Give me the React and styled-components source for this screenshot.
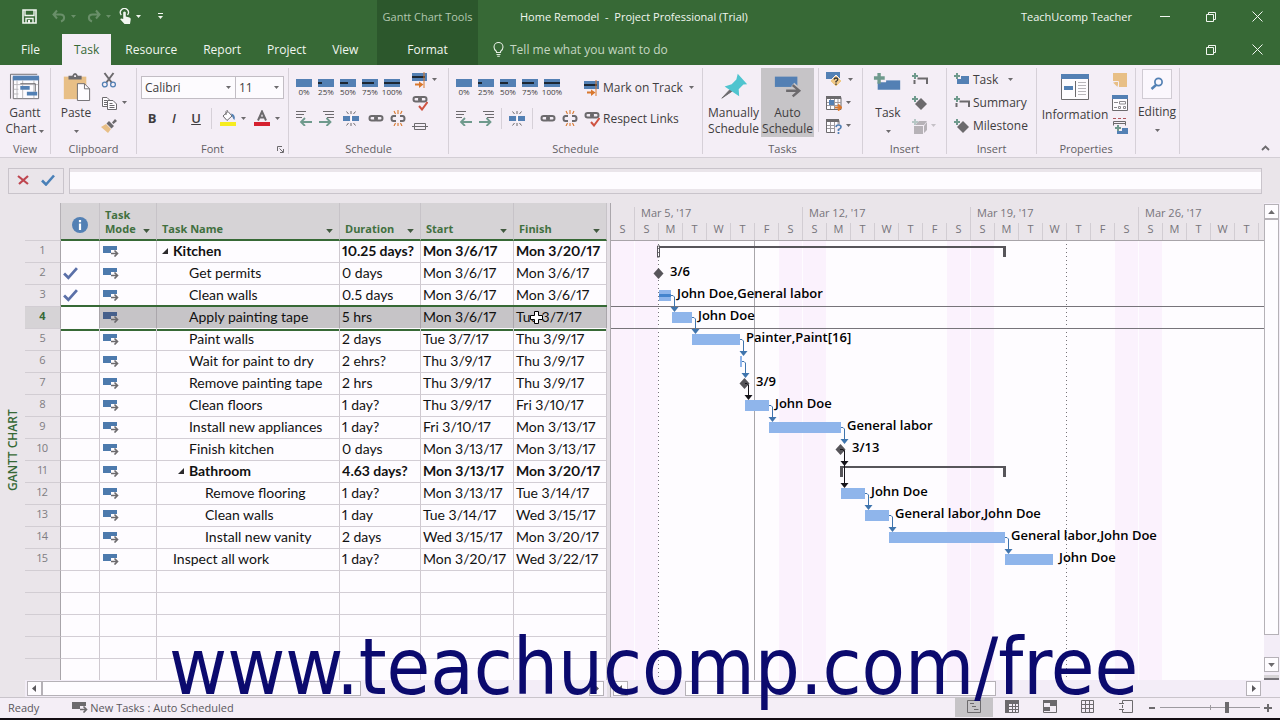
/* eslint-disable react/prop-types */
import { useState } from "react";
import styled, { createGlobalStyle } from "styled-components";

const fontUi = `"Open Sans", "Noto Sans", sans-serif`;
const fontGrid = `Lato, "Open Sans", sans-serif`;

const green = "#376936";
const greenDark = "#2c572c";
const blue = "#5380b4";
const orange = "#d9782d";
const gray = "#6c6a6d";
const teal = "#6f9a8d";

const GlobalStyle = createGlobalStyle`
  * {
    box-sizing: border-box;
  }

  body {
    margin: 0;
    font-family: ${fontUi};
    font-size: 12px;
    color: #3f3d40;
    background: #eae5ea;
  }

  button,
  select,
  input {
    font: inherit;
    color: inherit;
    margin: 0;
    padding: 0;
    border: 0;
    background: none;
  }
`;

const Page = styled.div`
  position: relative;
  display: flex;
  flex-direction: column;
  height: 100vh;
  overflow: hidden;
`;

/* ---------- title bar and tabs ---------- */

const TitleRow = styled.header`
  display: flex;
  align-items: center;
  height: 34px;
  padding-bottom: 2px;
  background: ${green};
  color: #f1f6f0;
`;

const QuickAccess = styled.div`
  display: flex;
  align-items: center;
  width: 377px;
  padding-left: 21px;
`;

const QuickButton = styled.button`
  display: flex;
  align-items: center;
  gap: 4px;
  height: 24px;
  margin-right: ${({ $gap }) => $gap || 10}px;
  opacity: ${({ disabled }) => (disabled ? 0.25 : 1)};
`;

const ContextTitle = styled.div`
  display: flex;
  align-items: center;
  justify-content: center;
  width: 101px;
  height: 34px;
  margin-bottom: -2px;
  padding-bottom: 2px;
  font-size: 11px;
  white-space: nowrap;
  background: ${greenDark};
  color: #b3c8b0;
`;

const DocTitle = styled.h1`
  flex: 1;
  margin: 0;
  padding-left: 42px;
  font-size: 11px;
  font-weight: 400;
  white-space: pre;
`;

const UserName = styled.span`
  padding-right: 10px;
  font-size: 11px;
`;

const WindowButton = styled.button`
  display: flex;
  align-items: center;
  justify-content: center;
  width: 46px;
  height: 31px;
  color: #f1f6f0;
`;

const TabsRow = styled.nav`
  display: flex;
  height: 31px;
  background: ${green};
  color: #f1f6f0;
`;

const TabList = styled.div`
  display: flex;
  gap: 2px;
  width: 377px;
`;

const Tab = styled.button`
  padding: 0 12px;
  color: ${({ $active }) => ($active ? green : "#f1f6f0")};
  background: ${({ $active }) => ($active ? "#f4eef6" : "transparent")};

  &:first-child {
    padding: 0 20px 0 21px;
  }
`;

const ContextTab = styled.button`
  width: 101px;
  background: ${greenDark};
`;

const TellMe = styled.button`
  display: flex;
  flex: 1;
  align-items: center;
  gap: 6px;
  padding-left: 15px;
  color: #c5d6c2;
`;

/* ---------- ribbon ---------- */

const Ribbon = styled.div`
  display: flex;
  height: 93px;
  padding-top: 3px;
  background: #f4eef6;
  border-bottom: 1px solid #d3ced5;
`;

const GroupBox = styled.section`
  display: flex;
  flex-direction: column;
  flex: 0 0 ${({ $width }) => $width}px;
  height: 86px;
  border-right: 1px solid #d6d0d8;
`;

const GroupBody = styled.div`
  display: flex;
  flex: 1;
  padding-left: ${({ $inset }) => $inset || 0}px;
`;

const GroupLabel = styled.div`
  height: 14px;
  font-size: 11px;
  line-height: 17px;
  text-align: center;
  color: #626064;
`;

const Launcher = styled.button`
  position: absolute;
  right: 4px;
  bottom: 0;
  height: 14px;
`;

const FontGroup = styled(GroupBox)`
  position: relative;
`;

const LargeButton = styled.button`
  display: flex;
  flex-direction: column;
  align-items: center;
  width: ${({ $width }) => $width}px;
  height: 69px;
  padding-top: 3px;
  font-size: 12px;
  line-height: 16px;
  background: ${({ $active }) => ($active ? "#c6c4c7" : "transparent")};

  > svg:first-child {
    margin-bottom: 4px;
  }
`;

const SmallColumn = styled.div`
  display: flex;
  flex-direction: column;
  margin-left: ${({ $left }) => $left || 0}px;
  padding-top: ${({ $top }) => $top || 0}px;
`;

const SmallButton = styled.button`
  display: flex;
  align-items: center;
  gap: ${({ $gap }) => $gap || 3}px;
  height: ${({ $tall }) => ($tall ? 31 : 23)}px;
  white-space: nowrap;
`;

const Divider = styled.span`
  width: 1px;
  height: ${({ $height }) => $height || 21}px;
  margin: 0 ${({ $space }) => $space || 0}px;
  background: #d6d0d8;
`;

const FontPanel = styled.div`
  display: flex;
  flex-direction: column;
  gap: 8px;
  padding: 8px 3px 0 4px;
`;

const ComboRow = styled.div`
  display: flex;
`;

const Combo = styled.label`
  position: relative;
  display: flex;
  width: ${({ $width }) => $width}px;
  height: 23px;
  margin-right: -1px;
  border: 1px solid #c2bdc4;
  background: #fdfbfe;

  select {
    flex: 1;
    padding-left: 3px;
    appearance: none;
    outline: none;
  }

  svg {
    position: absolute;
    right: 4px;
    top: 9px;
    pointer-events: none;
  }
`;

const FormatRow = styled.div`
  display: flex;
  align-items: center;
  height: 22px;
`;

const FormatButton = styled.button`
  display: flex;
  align-items: center;
  justify-content: center;
  gap: 5px;
  width: ${({ $width }) => $width || 22}px;
  font-weight: ${({ $weight }) => $weight || 400};
  font-style: ${({ $italic }) => ($italic ? "italic" : "normal")};
  text-decoration: ${({ $underline }) => ($underline ? "underline" : "none")};
  font-size: 13px;
`;

const SchedulePanel = styled.div`
  display: flex;
  flex-direction: column;
  gap: 6px;
  padding-top: 8px;
`;

const IconRow = styled.div`
  display: flex;
  align-items: center;
  height: 24px;
`;

const PercentButton = styled.button`
  display: flex;
  flex-direction: column;
  align-items: center;
  width: 22px;
  font-size: 8px;
  line-height: 10px;
`;

const IconButton = styled.button`
  display: flex;
  align-items: center;
  justify-content: center;
  width: ${({ $width }) => $width || 22}px;
`;

const SearchFrame = styled.span`
  display: flex;
  align-items: center;
  justify-content: center;
  width: 30px;
  height: 30px;
  margin: 1px 0 5px;
  border: 1px solid #d0cbd3;
  background: #fbf7fd;
`;

const EditingButton = styled.button`
  display: flex;
  flex-direction: column;
  align-items: center;
  width: 42px;
  height: 69px;
  line-height: 16px;
`;

const RibbonEnd = styled.div`
  display: flex;
  flex: 1;
  align-items: flex-end;
  justify-content: flex-end;
  padding: 0 10px 2px 0;
`;

/* ---------- entry bar ---------- */

const EntryBar = styled.div`
  display: flex;
  gap: 5px;
  padding: 10px 18px 9px 8px;
`;

const EntryActions = styled.div`
  display: flex;
  align-items: center;
  justify-content: space-between;
  width: 56px;
  height: 26px;
  padding: 0 8px;
  border: 1px solid #c9c4cb;
`;

const EntryInput = styled.input`
  flex: 1;
  height: 26px;
  padding: 0 4px;
  border: 1px solid #c9c4cb;
  background: linear-gradient(#eae5ea 3px, #fefcff 3px, #fefcff 20px, #eae5ea 20px);
  outline: none;
`;

/* ---------- work area ---------- */

const WorkArea = styled.main`
  display: flex;
  flex: 1;
  min-height: 0;
`;

const ViewLabel = styled.div`
  display: flex;
  align-items: center;
  justify-content: center;
  width: 25px;
  writing-mode: vertical-rl;
  transform: rotate(180deg);
  font-size: 12px;
  font-weight: 600;
  color: ${green};
`;

const TablePane = styled.div`
  display: flex;
  flex-direction: column;
  width: 582px;
`;

const TableClip = styled.div`
  flex: 1;
  overflow: hidden;
  background: #fefcff;
`;

const TaskTable = styled.table`
  width: 582px;
  table-layout: fixed;
  border-collapse: separate;
  border-spacing: 0;
  font-family: ${fontGrid};
  font-size: 14px;
  line-height: 18px;
  font-variant-numeric: proportional-nums;
  color: #111;
`;

const HeadCell = styled.th`
  height: 38px;
  padding: 0 0 3px 5px;
  vertical-align: bottom;
  text-align: left;
  font-family: ${fontUi};
  font-size: 11px;
  font-weight: 700;
  line-height: 14px;
  color: #41703f;
  background: #d6d3d6;
  border-right: 1px solid #c7c3c8;
  border-bottom: 2px solid ${green};

  &:first-child {
    background: #eae5ea;
    border-right-color: #b5b1b6;
    border-bottom: 1px solid #d2cdd3;
  }
`;

const HeadInner = styled.div`
  display: flex;
  align-items: flex-end;
  justify-content: ${({ $center }) => ($center ? "center" : "space-between")};
  padding-right: 6px;

  > svg {
    flex-shrink: 0;
    margin-bottom: 3px;
  }
`;

const RowNumber = styled.th`
  height: 22px;
  padding: 0 0 3px;
  font-family: ${fontUi};
  font-size: 11px;
  font-weight: ${({ $selected }) => ($selected ? 700 : 400)};
  color: ${({ $selected }) => ($selected ? green : "#807d82")};
  background: ${({ $selected }) => ($selected ? "#d6d3d6" : "#eae5ea")};
  border-right: 1px solid #a8a4a9;
  border-bottom: 1px solid #d2cdd3;
`;

const Cell = styled.td`
  position: relative;
  height: 22px;
  padding: 0 0 2px 2px;
  white-space: nowrap;
  font-weight: ${({ $bold }) => ($bold ? 700 : 400)};
  border-right: 1px solid #cfc9d0;
  border-bottom: 1px solid #d3ced5;

  svg {
    display: block;
  }
`;

const SelectedCell = styled(Cell)`
  background: ${({ $plain }) => ($plain ? "#fefcff" : "#c6c4c7")};
  border-bottom: 1px solid #fefcff;
  border-right-color: #aaa6ab;
  box-shadow: 0 -2px 0 ${green}, 0 2px 0 ${green};
`;

const NameCell = styled.span`
  display: flex;
  align-items: center;
  padding-left: ${({ $level }) => 3 + $level * 16}px;

  &::before {
    content: "";
    width: ${({ $summary }) => ($summary ? 0 : 11)}px;
  }
`;

const Twisty = styled.span`
  width: 11px;
`;

const Pointer = styled.svg`
  position: absolute;
  left: 16px;
  top: 4px;
`;

const ScrollRow = styled.div`
  display: flex;
  height: 17px;
  padding: 1px 3px 1px 2px;
  background: #f3edf7;
`;

const ScrollButton = styled.button`
  display: flex;
  align-items: center;
  justify-content: center;
  width: 15px;
  height: 15px;
  border: 1px solid #b5b1b7;
  background: #fefcff;
`;

const ScrollTrack = styled.div`
  display: flex;
  flex: 1;
  padding-left: ${({ $lead }) => $lead || 0}px;
`;

const ScrollThumb = styled.div`
  width: ${({ $width }) => $width}px;
  height: 15px;
  border: 1px solid #b5b1b7;
  background: #fefcff;
`;

const Splitter = styled.div`
  width: 4px;
  border-right: 1px solid #aba7ac;
  background: #e4dfe5;
`;

const ChartPane = styled.div`
  display: flex;
  flex: 1;
  flex-direction: column;
  min-width: 0;
`;

const Timescale = styled.div`
  height: 38px;
  overflow: hidden;
  color: #77747a;
  font-size: 11px;
  border-bottom: 1px solid #a8a4a9;
`;

const WeekRow = styled.div`
  display: flex;
  height: 20px;
  padding-top: 4px;
`;

const Week = styled.span`
  flex: 0 0 168px;
  padding-left: 6px;
  line-height: 12px;
  border-left: 1px solid #d2cdd3;

  &:first-child {
    flex-basis: 23px;
    border-left: 0;
  }
`;

const DayRow = styled.div`
  display: flex;
`;

const Day = styled.span`
  flex: 0 0 24px;
  height: 18px;
  line-height: 11px;
  font-size: 11px;
  text-align: center;
  border-right: 1px solid #d2cdd3;
`;

const ChartBody = styled.div`
  flex: 1;
  min-height: 0;
  overflow: hidden;
  background: #fefcff;

  svg {
    display: block;
  }

  text {
    font-family: ${fontUi};
    font-size: 13px;
    font-weight: 600;
    fill: #000;
  }
`;

const VerticalScroll = styled.div`
  display: flex;
  flex-direction: column;
  width: 16px;
  padding: 1px 0;
  background: #f3edf7;
`;

const VerticalThumb = styled.div`
  width: 15px;
  height: 416px;
  border: 1px solid #b5b1b7;
  background: #fefcff;
`;

const Spacer = styled.div`
  flex: 1;
`;

const PaneHandle = styled.div`
  width: 15px;
  height: 5px;
  margin: 3px 0 16px;
  border-bottom: 2px solid #77747a;
  background: #d6d3d6;
`;

/* ---------- status bar ---------- */

const StatusBar = styled.footer`
  display: flex;
  align-items: center;
  height: 23px;
  padding: 0 0 2px 8px;
  border-top: 1px solid #c9c4cb;
  border-bottom: 2px solid #120c12;
  background: #f4eef6;
  color: #5a575c;
  font-size: 11px;
`;

const NewTasks = styled.button`
  display: flex;
  align-items: center;
  gap: 2px;
  margin-left: 32px;
`;

const ViewButton = styled.button`
  display: flex;
  align-items: center;
  justify-content: center;
  width: 38px;
  height: 20px;
  background: ${({ $active }) => ($active ? "#c6c4c7" : "transparent")};
`;

const Zoom = styled.div`
  display: flex;
  align-items: center;
  gap: 4px;
  padding: 0 8px 0 3px;
`;

const ZoomSlider = styled.input`
  width: 100px;
  height: 16px;
  appearance: none;
  background: linear-gradient(#9d9a9f, #9d9a9f) center / 100% 1px no-repeat,
    linear-gradient(#9d9a9f, #9d9a9f) center / 1px 5px no-repeat;

  &::-webkit-slider-thumb {
    appearance: none;
    width: 4px;
    height: 11px;
    background: ${gray};
  }
`;

const Banner = styled.div`
  position: absolute;
  left: 169px;
  bottom: 13px;
  font-family: "DejaVu Sans Condensed", "DejaVu Sans", sans-serif;
  font-size: 79px;
  line-height: 80px;
  color: #0b0a6e;
  white-space: nowrap;
  pointer-events: none;
`;

/* ---------- icons ---------- */

const Icon = ({ w = 16, h = 16, box, children }) => (
  <svg
    width={w}
    height={h}
    viewBox={box || `0 0 ${w} ${h}`}
    fill="none"
    aria-hidden="true"
  >
    {children}
  </svg>
);

const Caret = ({ color = gray, up, size = 5 }) => (
  <Icon w={size} h={Math.round(size * 0.6)} box="0 0 5 3">
    <path d={up ? "M0 3L2.5 0L5 3Z" : "M0 0H5L2.5 3Z"} fill={color} />
  </Icon>
);

const Plus = ({ x = 0, y = 0 }) => (
  <path
    d={`M${x + 3} ${y}v6M${x} ${y + 3}h6`}
    stroke={teal}
    strokeWidth="2"
  />
);

const SaveIcon = () => (
  <Icon>
    <path d="M2 2H15V15H2Z" stroke="#f1f6f0" strokeWidth="1.6" />
    <path d="M4 2V7.5H13V2M5 15V10.5H12V15" stroke="#f1f6f0" strokeWidth="1.4" />
    <path d="M7 12h2v3h-2z" fill="#f1f6f0" />
  </Icon>
);

const UndoIcon = ({ flip }) => (
  <Icon>
    <g transform={flip ? "translate(16 0) scale(-1 1)" : undefined}>
      <path
        d="M6 2.5L2.5 6.5L6 10.5M3 6.5H9.5C14 6.5 14.5 12 10 13.5"
        stroke="#fff"
        strokeWidth="2"
      />
    </g>
  </Icon>
);

const TouchIcon = () => (
  <Icon w={13} h={17}>
    <path d="M2.3 7A4 4 0 1 1 8.5 7" stroke="#f1f6f0" strokeWidth="1.3" />
    <path
      d="M4.2 4.2Q5.5 2.8 6.8 4.2V8.5L10.5 9.4Q12 9.8 11.7 11.5L11 16H5.5L1.2 11.3Q1.6 9.8 4.2 11Z"
      fill="#f1f6f0"
    />
  </Icon>
);

const CustomizeIcon = () => (
  <Icon w={7} h={8}>
    <path d="M1 1.5h5" stroke="#f1f6f0" />
    <path d="M1 4h5L3.5 7Z" fill="#f1f6f0" />
  </Icon>
);

const BulbIcon = () => (
  <Icon w={11} h={15}>
    <path
      d="M3.5 10.5V9.5Q1 7.6 1 5A4.4 4.4 0 0 1 10 5Q10 7.6 7.5 9.5V10.5ZM3.5 12.5H7.5M4.2 14.2H6.8"
      stroke="#e4ede2"
      strokeWidth="1.1"
    />
  </Icon>
);

const MinimizeIcon = () => (
  <Icon w={10} h={10}>
    <path d="M0 5.5H10" stroke="#f1f6f0" />
  </Icon>
);

const RestoreIcon = () => (
  <Icon w={11} h={11}>
    <path d="M0.5 3.5H7.5V10.5H0.5ZM2.5 3V1.5H9.5V8.5H8" stroke="#f1f6f0" />
  </Icon>
);

const CloseIcon = () => (
  <Icon w={11} h={11}>
    <path d="M0.5 0.5L10.5 10.5M10.5 0.5L0.5 10.5" stroke="#f1f6f0" />
  </Icon>
);

const GanttViewIcon = () => (
  <Icon w={32} h={32}>
    <path d="M0.5 29.5V3.5H29" stroke={gray} />
    <path d="M3.5 6.5H30.5V29.5H3.5Z" fill="#fefcff" stroke={gray} />
    <path d="M3 5H31V10H3Z" fill={blue} />
    <path
      d="M4 14.5H30M4 19.5H9M4 24.5H9M7.5 10V29M13.5 10V29M25.5 10V29"
      stroke="#b9b6bb"
    />
    <path d="M11 16H21V20H11ZM18 22H29V26H18Z" fill={blue} />
    <path d="M11 13.5H27V22" stroke={gray} />
  </Icon>
);

const PasteIcon = () => (
  <Icon w={30} h={32}>
    <path d="M2 6H26V30H2Z" fill="#e8bf86" />
    <path d="M7 9V5H11Q12 2 14 2Q16 2 17 5H21V9Z" fill={gray} />
    <path d="M13 4.5h2v2h-2z" fill="#f4eef6" />
    <path d="M16.5 13.5H24L29.5 19V31.5H16.5Z" fill="#fefcff" stroke={gray} />
    <path d="M24 13.5V19H29.5" stroke={gray} />
  </Icon>
);

const ScissorsIcon = () => (
  <Icon>
    <path d="M3.5 1L11 11M12.5 1L5 11" stroke={gray} strokeWidth="2" />
    <circle cx="3.8" cy="12.5" r="2.4" stroke={blue} strokeWidth="1.3" />
    <circle cx="12" cy="12.5" r="2.4" stroke={blue} strokeWidth="1.3" />
  </Icon>
);

const CopyIcon = () => (
  <Icon>
    <path d="M1.5 2.5H6L8.5 5V11.5H1.5Z" fill="#fefcff" stroke={gray} />
    <path d="M6.5 5.5H12L15.5 9V14.5H6.5Z" fill="#fefcff" stroke={gray} />
    <path d="M3 5.5h3M3 7.5h3M3 9.5h3M8.5 8.5h3M8.5 10.5h5M8.5 12.5h5" stroke={gray} />
  </Icon>
);

const BrushIcon = () => (
  <Icon>
    <path d="M5 6L10 11L7 15L0 9Z" fill="#e8bf86" />
    <path d="M8 3L13 8L10.5 10.5L5.5 5.5ZM11 4.5L14 1L16 3L12.5 6Z" fill={gray} />
  </Icon>
);

const BucketIcon = () => (
  <Icon>
    <path d="M3 6L8 1.5L12 6L7 10.5Z" fill="#fefcff" stroke={gray} />
    <path d="M6 5V1.5Q6.5 0 8 1" stroke={gray} />
    <path d="M11 3.5Q16 4.5 14.5 10Q13 9 12 6Z" fill={blue} />
    <path d="M0 12H16V16H0Z" fill="#f6ec1f" />
  </Icon>
);

const FontColorIcon = () => (
  <Icon>
    <path d="M4 10.5L8 1.5L12 10.5M5.5 7.5H10.5" stroke={gray} strokeWidth="2" />
    <path d="M0 12H16V16H0Z" fill="#d5202f" />
  </Icon>
);

const PercentIcon = ({ done }) => (
  <Icon w={16} h={8}>
    <path d="M0 0H16V8H0Z" fill={blue} />
    {done > 0 && (
      <path d={`M0 4H${(16 * done) / 100}`} stroke="#1c2733" strokeWidth="2" />
    )}
  </Icon>
);

const IndentIcon = ({ right }) => (
  <Icon>
    {right ? (
      <path d="M5 1.5H16M7 4.5H16M9 7.5H16" stroke={gray} />
    ) : (
      <path d="M0 1.5H10M0 4.5H8M0 7.5H6" stroke={gray} />
    )}
    <path
      d={right ? "M1 12H12M8.5 8L12.5 12L8.5 16" : "M5 12H16M9 8L5 12L9 16"}
      stroke={teal}
      strokeWidth="1.8"
    />
  </Icon>
);

const SplitIcon = () => (
  <Icon>
    <path d="M0 6H7V11H0ZM9 6H16V11H9Z" fill={blue} />
    <path
      d="M8 1V4M3.5 1.5L5.5 4M12.5 1.5L10.5 4M8 13V16M3.5 15.5L5.5 13M12.5 15.5L10.5 13"
      stroke={gray}
    />
    <path d="M8.5 5V12" stroke="#fefcff" />
  </Icon>
);

const Chain = ({ y = 0 }) => (
  <g stroke={gray} strokeWidth="2">
    <rect x="1.5" y={y + 2} width="7.5" height="4.5" rx="2.2" />
    <rect x="7" y={y + 2} width="7.5" height="4.5" rx="2.2" />
  </g>
);

const LinkIcon = () => (
  <Icon>
    <Chain y={4} />
  </Icon>
);

const UnlinkIcon = () => (
  <Icon>
    <path
      d="M6 6H3.5Q1.5 6 1.5 8.5Q1.5 11 3.5 11H6M10 6H12.5Q14.5 6 14.5 8.5Q14.5 11 12.5 11H10"
      stroke={gray}
      strokeWidth="2"
    />
    <path
      d="M8 0V4M4 1L5.5 4M12 1L10.5 4M8 16V13M4 16L5.5 13M12 16L10.5 13"
      stroke={orange}
      strokeWidth="1.1"
    />
  </Icon>
);

const TrackIcon = () => (
  <Icon>
    <path d="M0 1H15V9H0Z" fill={blue} />
    <path d="M0 5H13" stroke="#1c2733" strokeWidth="2" />
    <path d="M12 0V16" stroke={orange} />
    <path d="M3 12.5H9" stroke={orange} strokeWidth="2" />
    <path d="M7 9.5L11.5 12.5L7 16Z" fill={orange} />
  </Icon>
);

const RespectIcon = () => (
  <Icon>
    <Chain />
    <path d="M7 11L10 14.5L15.5 7" stroke="#cf5341" strokeWidth="2" />
  </Icon>
);

const InactivateIcon = () => (
  <Icon>
    <path d="M0 8.5H16M2.5 5.5H13.5V11.5H2.5Z" stroke={gray} />
  </Icon>
);

const PinIcon = () => (
  <Icon w={32} h={32}>
    <path d="M3 29L12 19.5L14 21.5Z" fill={gray} stroke={gray} />
    <path
      d="M20 3L30 14L26 14.5L21 19.5L21.5 27L6 16.5L13.5 14L18.5 9Z"
      fill="#4fc4cf"
    />
  </Icon>
);

const AutoIcon = () => (
  <Icon w={32} h={32}>
    <path d="M2 6H26V17H2Z" fill={blue} />
    <path
      d="M13 21H27M21 14.5L28.5 21L21 27.5"
      stroke="#c6c4c7"
      strokeWidth="5"
    />
    <path d="M14 21H27M21 15L28 21L21 27" stroke={gray} strokeWidth="2.6" />
  </Icon>
);

const InspectIcon = () => (
  <Icon>
    <path d="M0 0H14V7H0Z" fill={blue} />
    <path d="M10 3L16 9L10 15L4 9Z" fill="#f0c987" stroke="#f4eef6" />
    <path
      d="M8 7.5Q8.3 6 10 6Q11.8 6 11.8 7.5Q11.8 8.5 10 9.5V10.5M10 11.5V13"
      stroke="#333"
      strokeWidth="1.3"
    />
  </Icon>
);

const CalendarBase = ({ w = 15 }) => (
  <>
    <path d={`M0.5 2.5H${w}V14.5H0.5Z`} fill="#fefcff" stroke={gray} />
    <path d={`M0 1H${w}V4H0Z`} fill={gray} />
    <path
      d={`M4.5 4V14M8.5 4V14M12 4V14M1 7.5H${w}M1 10.5H${w}`}
      stroke="#9d9a9f"
    />
  </>
);

const MoveIcon = () => (
  <Icon>
    <CalendarBase />
    <path d="M3 5H8V10H3Z" fill={blue} />
    <path d="M9 12.5H15M12 9.5L15 12.5L12 15.5" stroke={orange} strokeWidth="2" />
  </Icon>
);

const ModeIcon = () => (
  <Icon>
    <CalendarBase w={13} />
    <path d="M9 6.5H16V16H9Z" fill="#f4eef6" />
    <path
      d="M10 9Q10.3 7 12.5 7Q15 7 15 9Q15 10.5 12.5 11.5V13M12.5 14V16"
      stroke={blue}
      strokeWidth="1.7"
    />
  </Icon>
);

const InsertTaskIcon = () => (
  <Icon w={32} h={32}>
    <path d="M5 10H29V20H5Z" fill={blue} />
    <path d="M0 5H14V12H0Z" fill="#f4eef6" />
    <path d="M6.5 2V13.5M1 7.5H12.5" stroke={teal} strokeWidth="3.6" />
  </Icon>
);

const SummaryIcon = () => (
  <Icon>
    <Plus y={1} />
    <path d="M2.5 8V12M5.5 6.5H15V12" stroke={gray} strokeWidth="2" />
  </Icon>
);

const MilestoneIcon = () => (
  <Icon>
    <path d="M9 3L15 9L9 15L3 9Z" fill={gray} />
    <path d="M0 3h6v2h-6z" fill="#f4eef6" />
    <Plus y={1} />
  </Icon>
);

const DeliverableIcon = () => (
  <Icon>
    <g opacity="0.45">
      <path d="M2 8H11V16H2ZM3 7L7 3H15L12 7ZM12 8L15 4V12L12 15Z" fill={gray} />
      <Plus y={1} />
    </g>
  </Icon>
);

const SmallTaskIcon = () => (
  <Icon>
    <path d="M3 4H15V12H3Z" fill={blue} />
    <path d="M0 2h7v5h-7z" fill="#f4eef6" />
    <Plus y={1} />
  </Icon>
);

const InformationIcon = () => (
  <Icon w={32} h={32}>
    <path d="M2.5 4.5H29.5V28.5H2.5Z" fill="#fefcff" stroke={gray} />
    <path d="M2 3H30V8H2Z" fill={blue} />
    <path d="M5 15H14V19H5Z" fill={blue} />
    <path d="M16.5 10V26" stroke={gray} />
    <path
      d="M19 11.5H27M19 14.5H27M19 17.5H27M19 20.5H27M19 23.5H27"
      stroke="#b9b6bb"
    />
  </Icon>
);

const NotesIcon = () => (
  <Icon>
    <path d="M1 1H15V15H7L1 9Z" fill="#e8bf86" />
    <path d="M1 9.5H6.5V15" stroke="#f4eef6" />
    <path d="M1 10.5H5.5V15Z" fill="#e8bf86" />
  </Icon>
);

const DetailsIcon = () => (
  <Icon>
    <path d="M0.5 1.5H15.5V15.5H0.5Z" fill="#fefcff" stroke={gray} />
    <path d="M0 0H16V4H0Z" fill={blue} />
    <path
      d="M2 7.5H6M7.5 6.5H13.5V9H7.5ZM2 12.5H5M6.5 11.5H8.5V13.5H6.5ZM11.5 11.5H13.5V13.5H11.5Z"
      stroke="#8d8a8f"
    />
  </Icon>
);

const TimelineIcon = () => (
  <Icon>
    <path d="M1 0.5H4M6 0.5H9M11 0.5H14" stroke="#b0555b" />
    <path d="M1.5 7.5V3.5H13.5V7.5M1.5 5.5H13" stroke={gray} />
    <path d="M5 10H16V16H5Z" fill={blue} />
    <path d="M2 7h8v6h-8z" fill="#f4eef6" />
    <Plus x={3} y={7} />
  </Icon>
);

const FindIcon = () => (
  <Icon>
    <circle cx="9.5" cy="6" r="3.6" stroke={blue} strokeWidth="1.7" />
    <path d="M7 9L2.5 13" stroke={blue} strokeWidth="2.4" />
  </Icon>
);

const LaunchIcon = () => (
  <Icon w={7} h={7}>
    <path d="M0.5 5V0.5H5M2.5 2.5L6 6M6.5 3V6.5H3" stroke={gray} />
  </Icon>
);

const ChevronIcon = () => (
  <Icon w={9} h={6}>
    <path d="M1 5L4.5 1.5L8 5" stroke={gray} strokeWidth="1.8" />
  </Icon>
);

const CancelIcon = () => (
  <Icon w={13} h={12}>
    <path d="M1 2L11 10M11 2L2 10" stroke="#bf4650" strokeWidth="2.2" />
  </Icon>
);

const AcceptIcon = ({ w = 14, h = 12, color = "#4a80b8" }) => (
  <Icon w={w} h={h} box="0 0 14 12">
    <path d="M1 6.5L5 10.5L13 1.5" stroke={color} strokeWidth="2.6" />
  </Icon>
);

const InfoIcon = () => (
  <Icon>
    <circle cx="8" cy="8" r="8" fill={blue} />
    <path d="M8 3V5.2M8 6.5V13" stroke="#fff" strokeWidth="2.2" />
  </Icon>
);

const AutoModeIcon = ({ tone = "#4d7aad" }) => (
  <Icon w={17} h={12}>
    <path d="M1 1H15V5H9V8H1Z" fill={tone} />
    <path
      d="M9 8.5H15M12.5 5.5L15.5 8.5L12.5 11.5"
      stroke={gray}
      strokeWidth="1.6"
    />
  </Icon>
);

const TriangleIcon = () => (
  <Icon w={6} h={6}>
    <path d="M6 0V6H0Z" fill="#2b2a2c" />
  </Icon>
);

const ArrowIcon = ({ d }) => (
  <Icon w={7} h={7}>
    <path d={d} fill="#5a575c" />
  </Icon>
);

const StatusIcon = ({ kind }) => (
  <Icon w={14} h={14}>
    {kind === "gantt" && (
      <path
        d="M0.5 0.5H13.5V12.5H0.5ZM3 3.5H7M5 6.5H9M7 9.5H11.5"
        stroke={gray}
      />
    )}
    {kind === "usage" && (
      <>
        <path d="M0 0H14V4H0ZM0 4H4V13H0Z" fill={gray} />
        <path
          d="M0.5 0.5H13.5V12.5H0.5ZM4 6.5H13M4 9.5H13M7.5 3V13M10.5 3V13"
          stroke={gray}
        />
      </>
    )}
    {kind === "team" && (
      <>
        <path d="M0.5 0.5H13.5V12.5H0.5Z" stroke={gray} />
        <path d="M0 0H14V3H0ZM7 3H13V6H7ZM1 7H7V11H1Z" fill={gray} />
      </>
    )}
    {kind === "sheet" && (
      <path
        d="M0.5 0.5H12.5V12.5H0.5ZM4.5 0V13M8.5 0V13M0 4.5H13M0 8.5H13"
        stroke={gray}
      />
    )}
    {kind === "report" && (
      <path
        d="M3.5 3V0.5H13.5V12.5H3.5V10M3.5 5V8M0 3.5H5M0 9.5H5"
        stroke={gray}
      />
    )}
  </Icon>
);

/* ---------- data ---------- */

const tabs = ["File", "Task", "Resource", "Report", "Project", "View"];
const percents = [0, 25, 50, 75, 100];

const tasks = [
  { name: "Kitchen", level: 0, summary: true, duration: "10.25 days?", start: "Mon 3/6/17", finish: "Mon 3/20/17" },
  { name: "Get permits", level: 1, done: true, duration: "0 days", start: "Mon 3/6/17", finish: "Mon 3/6/17" },
  { name: "Clean walls", level: 1, done: true, duration: "0.5 days", start: "Mon 3/6/17", finish: "Mon 3/6/17" },
  { name: "Apply painting tape", level: 1, selected: true, duration: "5 hrs", start: "Mon 3/6/17", finish: "Tue 3/7/17" },
  { name: "Paint walls", level: 1, duration: "2 days", start: "Tue 3/7/17", finish: "Thu 3/9/17" },
  { name: "Wait for paint to dry", level: 1, duration: "2 ehrs?", start: "Thu 3/9/17", finish: "Thu 3/9/17" },
  { name: "Remove painting tape", level: 1, duration: "2 hrs", start: "Thu 3/9/17", finish: "Thu 3/9/17" },
  { name: "Clean floors", level: 1, duration: "1 day?", start: "Thu 3/9/17", finish: "Fri 3/10/17" },
  { name: "Install new appliances", level: 1, duration: "1 day?", start: "Fri 3/10/17", finish: "Mon 3/13/17" },
  { name: "Finish kitchen", level: 1, duration: "0 days", start: "Mon 3/13/17", finish: "Mon 3/13/17" },
  { name: "Bathroom", level: 1, summary: true, duration: "4.63 days?", start: "Mon 3/13/17", finish: "Mon 3/20/17" },
  { name: "Remove flooring", level: 2, duration: "1 day?", start: "Mon 3/13/17", finish: "Tue 3/14/17" },
  { name: "Clean walls", level: 2, duration: "1 day", start: "Tue 3/14/17", finish: "Wed 3/15/17" },
  { name: "Install new vanity", level: 2, duration: "2 days", start: "Wed 3/15/17", finish: "Mon 3/20/17" },
  { name: "Inspect all work", level: 0, duration: "1 day?", start: "Mon 3/20/17", finish: "Wed 3/22/17" },
];

const emptyRows = [16, 17, 18, 19, 20];
const columns = [36, 39, 57, 183, 81, 93, 93];

// x positions are measured from the left edge of the chart
const bars = [
  { row: 3, x: 48, width: 12, label: "John Doe,General labor", progress: true },
  { row: 4, x: 61, width: 20, label: "John Doe" },
  { row: 5, x: 81, width: 48, label: "Painter,Paint[16]" },
  { row: 6, x: 129, width: 2 },
  { row: 8, x: 134, width: 24, label: "John Doe" },
  { row: 9, x: 158, width: 72, label: "General labor" },
  { row: 12, x: 230, width: 24, label: "John Doe" },
  { row: 13, x: 254, width: 24, label: "General labor,John Doe" },
  { row: 14, x: 278, width: 116, label: "General labor,John Doe" },
  { row: 15, x: 394, width: 48, label: "John Doe" },
];

const milestones = [
  { row: 2, x: 47, label: "3/6" },
  { row: 7, x: 133, label: "3/9" },
  { row: 10, x: 229, label: "3/13" },
];

const links = [
  { from: 3, to: 4, x: 60, turn: 63 },
  { from: 4, to: 5, x: 81, turn: 84 },
  { from: 5, to: 6, x: 129, turn: 132 },
  { from: 6, to: 7, x: 131, turn: 134 },
  { from: 7, to: 8, x: 134, turn: 137, dark: true },
  { from: 8, to: 9, x: 158, turn: 161 },
  { from: 9, to: 10, x: 230, turn: 233 },
  { from: 10, to: 11, x: 229, turn: 233, dark: true },
  { from: 10, to: 12, x: 229, turn: 233, dark: true },
  { from: 12, to: 13, x: 254, turn: 257 },
  { from: 13, to: 14, x: 278, turn: 281 },
  { from: 14, to: 15, x: 394, turn: 397 },
];

const days = "SSMTWTFSSMTWTFSSMTWTFSSMTWT".split("");
const weeks = ["", "Mar 5, '17", "Mar 12, '17", "Mar 19, '17", "Mar 26, '17"];

const rowCenter = (row) => row * 22 - 12;

/* ---------- sections ---------- */

function Group({ label, width, inset, children }) {
  return (
    <GroupBox $width={width}>
      <GroupBody $inset={inset}>{children}</GroupBody>
      <GroupLabel>{label}</GroupLabel>
    </GroupBox>
  );
}

function PercentRow() {
  return (
    <IconRow>
      {percents.map((value) => (
        <PercentButton key={value}>
          <PercentIcon done={value} />
          {value}%
        </PercentButton>
      ))}
    </IconRow>
  );
}

function TitleBar() {
  return (
    <TitleRow>
      <QuickAccess>
        <QuickButton aria-label="Save" $gap={14}>
          <SaveIcon />
        </QuickButton>
        <QuickButton aria-label="Undo" disabled>
          <UndoIcon />
          <Caret color="#fff" />
        </QuickButton>
        <QuickButton aria-label="Redo" disabled $gap={8}>
          <UndoIcon flip />
          <Caret color="#fff" />
        </QuickButton>
        <QuickButton aria-label="Touch mode" $gap={16}>
          <TouchIcon />
          <Caret color="#f1f6f0" />
        </QuickButton>
        <QuickButton aria-label="Customize">
          <CustomizeIcon />
        </QuickButton>
      </QuickAccess>
      <ContextTitle>Gantt Chart Tools</ContextTitle>
      <DocTitle>{"Home Remodel  -  Project Professional (Trial)"}</DocTitle>
      <UserName>TeachUcomp Teacher</UserName>
      <WindowButton aria-label="Minimize">
        <MinimizeIcon />
      </WindowButton>
      <WindowButton aria-label="Restore">
        <RestoreIcon />
      </WindowButton>
      <WindowButton aria-label="Close">
        <CloseIcon />
      </WindowButton>
    </TitleRow>
  );
}

function TabBar() {
  const [active, setActive] = useState("Task");

  return (
    <TabsRow>
      <TabList>
        {tabs.map((tab) => (
          <Tab key={tab} $active={tab === active} onClick={() => setActive(tab)}>
            {tab}
          </Tab>
        ))}
      </TabList>
      <ContextTab>Format</ContextTab>
      <TellMe>
        <BulbIcon />
        Tell me what you want to do
      </TellMe>
      <WindowButton aria-label="Restore document">
        <RestoreIcon />
      </WindowButton>
      <WindowButton aria-label="Close document">
        <CloseIcon />
      </WindowButton>
    </TabsRow>
  );
}

function RibbonBar() {
  return (
    <Ribbon>
      <Group label="View" width={51}>
        <LargeButton $width={50}>
          <GanttViewIcon />
          <span>Gantt</span>
          <span>
            Chart <Caret />
          </span>
        </LargeButton>
      </Group>

      <Group label="Clipboard" width={86}>
        <LargeButton $width={50}>
          <PasteIcon />
          <span>Paste</span>
          <span>
            <Caret />
          </span>
        </LargeButton>
        <SmallColumn>
          <SmallButton aria-label="Cut">
            <ScissorsIcon />
          </SmallButton>
          <SmallButton aria-label="Copy" $gap={5}>
            <CopyIcon />
            <Caret />
          </SmallButton>
          <SmallButton aria-label="Format painter">
            <BrushIcon />
          </SmallButton>
        </SmallColumn>
      </Group>

      <FontGroup $width={152}>
        <GroupBody>
          <FontPanel>
            <ComboRow>
              <Combo $width={95}>
                <select aria-label="Font" defaultValue="Calibri">
                  <option>Calibri</option>
                </select>
                <Caret />
              </Combo>
              <Combo $width={49}>
                <select aria-label="Font size" defaultValue="11">
                  <option>11</option>
                </select>
                <Caret />
              </Combo>
            </ComboRow>
            <FormatRow>
              <FormatButton $weight={700}>B</FormatButton>
              <FormatButton $weight={600} $italic>
                I
              </FormatButton>
              <FormatButton $weight={600} $underline>
                U
              </FormatButton>
              <Divider $space={4} />
              <FormatButton aria-label="Background color" $width={34}>
                <BucketIcon />
                <Caret />
              </FormatButton>
              <FormatButton aria-label="Font color" $width={34}>
                <FontColorIcon />
                <Caret />
              </FormatButton>
            </FormatRow>
          </FontPanel>
        </GroupBody>
        <GroupLabel>Font</GroupLabel>
        <Launcher aria-label="Font settings">
          <LaunchIcon />
        </Launcher>
      </FontGroup>

      <Group label="Schedule" width={160} inset={4}>
        <SchedulePanel>
          <PercentRow />
          <IconRow>
            <IconButton aria-label="Outdent">
              <IndentIcon />
            </IconButton>
            <IconButton aria-label="Indent">
              <IndentIcon right />
            </IconButton>
            <IconButton aria-label="Split" $width={28}>
              <SplitIcon />
            </IconButton>
            <IconButton aria-label="Link">
              <LinkIcon />
            </IconButton>
            <IconButton aria-label="Unlink">
              <UnlinkIcon />
            </IconButton>
          </IconRow>
        </SchedulePanel>
        <SmallColumn $left={3}>
          <SmallButton aria-label="Mark on track" $gap={4}>
            <TrackIcon />
            <Caret />
          </SmallButton>
          <SmallButton aria-label="Respect links">
            <RespectIcon />
          </SmallButton>
          <SmallButton aria-label="Inactivate">
            <InactivateIcon />
          </SmallButton>
        </SmallColumn>
      </Group>

      <Group label="Schedule" width={254} inset={4}>
        <SchedulePanel>
          <PercentRow />
          <IconRow>
            <IconButton aria-label="Outdent">
              <IndentIcon />
            </IconButton>
            <IconButton aria-label="Indent">
              <IndentIcon right />
            </IconButton>
            <Divider $space={4} />
            <IconButton aria-label="Split">
              <SplitIcon />
            </IconButton>
            <Divider $space={4} />
            <IconButton aria-label="Link">
              <LinkIcon />
            </IconButton>
            <IconButton aria-label="Unlink">
              <UnlinkIcon />
            </IconButton>
          </IconRow>
        </SchedulePanel>
        <SmallColumn $left={3} $top={4}>
          <SmallButton $tall>
            <TrackIcon />
            Mark on Track&nbsp;
            <Caret />
          </SmallButton>
          <SmallButton $tall>
            <RespectIcon />
            Respect Links
          </SmallButton>
        </SmallColumn>
      </Group>

      <Group label="Tasks" width={160} inset={3}>
        <LargeButton $width={55}>
          <PinIcon />
          <span>Manually</span>
          <span>Schedule</span>
        </LargeButton>
        <LargeButton $width={53} $active>
          <AutoIcon />
          <span>Auto</span>
          <span>Schedule</span>
        </LargeButton>
        <SmallColumn $left={4}>
          <Divider $height={64} />
        </SmallColumn>
        <SmallColumn $left={7}>
          <SmallButton aria-label="Inspect" $gap={6}>
            <InspectIcon />
            <Caret />
          </SmallButton>
          <SmallButton aria-label="Move" $gap={4}>
            <MoveIcon />
            <Caret />
          </SmallButton>
          <SmallButton aria-label="Mode" $gap={4}>
            <ModeIcon />
            <Caret />
          </SmallButton>
        </SmallColumn>
      </Group>

      <Group label="Insert" width={84} inset={2}>
        <LargeButton $width={46}>
          <InsertTaskIcon />
          <span>Task</span>
          <span>
            <Caret />
          </span>
        </LargeButton>
        <SmallColumn $left={1}>
          <SmallButton aria-label="Insert summary">
            <SummaryIcon />
          </SmallButton>
          <SmallButton aria-label="Insert milestone">
            <MilestoneIcon />
          </SmallButton>
          <SmallButton aria-label="Insert deliverable" disabled>
            <DeliverableIcon />
            <Caret color="#c5c1c7" />
          </SmallButton>
        </SmallColumn>
      </Group>

      <Group label="Insert" width={90} inset={7}>
        <SmallColumn>
          <SmallButton>
            <SmallTaskIcon />
            Task&nbsp;&nbsp;
            <Caret />
          </SmallButton>
          <SmallButton>
            <SummaryIcon />
            Summary
          </SmallButton>
          <SmallButton>
            <MilestoneIcon />
            Milestone
          </SmallButton>
        </SmallColumn>
      </Group>

      <Group label="Properties" width={99} inset={4}>
        <LargeButton $width={68}>
          <InformationIcon />
          <span>Information</span>
        </LargeButton>
        <SmallColumn $left={3}>
          <SmallButton aria-label="Notes">
            <NotesIcon />
          </SmallButton>
          <SmallButton aria-label="Details">
            <DetailsIcon />
          </SmallButton>
          <SmallButton aria-label="Add to timeline">
            <TimelineIcon />
          </SmallButton>
        </SmallColumn>
      </Group>

      <Group width={44}>
        <EditingButton>
          <SearchFrame>
            <FindIcon />
          </SearchFrame>
          <span>Editing</span>
          <span>
            <Caret />
          </span>
        </EditingButton>
      </Group>

      <RibbonEnd>
        <button aria-label="Collapse ribbon">
          <ChevronIcon />
        </button>
      </RibbonEnd>
    </Ribbon>
  );
}

function TaskRow({ task, number }) {
  const Td = task.selected ? SelectedCell : Cell;

  return (
    <tr>
      <RowNumber scope="row" $selected={task.selected}>
        {number}
      </RowNumber>
      <Td $plain>
        {task.done && <AcceptIcon w={15} h={14} color="#5b70a8" />}
      </Td>
      <Td>
        <AutoModeIcon tone={task.selected ? "#46608c" : undefined} />
      </Td>
      <Td $bold={task.summary}>
        <NameCell $level={task.level} $summary={task.summary}>
          {task.summary && (
            <Twisty>
              <TriangleIcon />
            </Twisty>
          )}
          {task.name}
        </NameCell>
      </Td>
      <Td $bold={task.summary}>{task.duration}</Td>
      <Td $bold={task.summary}>{task.start}</Td>
      <Td $bold={task.summary}>
        {task.finish}
        {task.selected && (
          <Pointer width="13" height="13" viewBox="0 0 13 13" aria-hidden="true">
            <path
              d="M4.5 0.5H8.5V4.5H12.5V8.5H8.5V12.5H4.5V8.5H0.5V4.5H4.5Z"
              fill="#fff"
              stroke="#000"
            />
          </Pointer>
        )}
      </Td>
    </tr>
  );
}

function Grid() {
  return (
    <TablePane>
      <TableClip>
        <TaskTable>
          <colgroup>
            {columns.map((width, i) => (
              <col key={i} width={width} />
            ))}
          </colgroup>
          <thead>
            <tr>
              <HeadCell aria-label="Row" />
              <HeadCell aria-label="Indicators">
                <HeadInner $center>
                  <InfoIcon />
                </HeadInner>
              </HeadCell>
              {["Task Mode", "Task Name", "Duration", "Start", "Finish"].map((title) => (
                <HeadCell key={title}>
                  <HeadInner>
                    {title}
                    <Caret color="#41593f" size={7} />
                  </HeadInner>
                </HeadCell>
              ))}
            </tr>
          </thead>
          <tbody>
            {tasks.map((task, i) => (
              <TaskRow key={i} task={task} number={i + 1} />
            ))}
            {emptyRows.map((row) => (
              <tr key={row}>
                <RowNumber />
                {columns.slice(1).map((_, i) => (
                  <Cell key={i} />
                ))}
              </tr>
            ))}
          </tbody>
        </TaskTable>
      </TableClip>
      <ScrollRow>
        <ScrollButton aria-label="Scroll left">
          <ArrowIcon d="M5 0V7L1 3.5Z" />
        </ScrollButton>
        <ScrollTrack>
          <ScrollThumb $width={319} />
        </ScrollTrack>
        <ScrollButton aria-label="Scroll right">
          <ArrowIcon d="M2 0V7L6 3.5Z" />
        </ScrollButton>
      </ScrollRow>
    </TablePane>
  );
}

function Link({ from, to, x, turn, dark }) {
  const color = dark ? "#16141a" : "#3f74ad";
  const y = rowCenter(from) + 1;
  const tip = rowCenter(to) - 5;

  return (
    <g>
      <path
        d={`M${x} ${y - 0.5}H${turn - 1}L${turn + 0.5} ${y + 1}V${tip - 3}`}
        stroke={color}
        fill="none"
      />
      <path
        d={`M${turn - 3.5} ${tip - 5}H${turn + 4.5}L${turn + 0.5} ${tip}Z`}
        fill={color}
      />
    </g>
  );
}

function Gantt() {
  return (
    <ChartPane>
      <Timescale>
        <WeekRow>
          {weeks.map((week) => (
            <Week key={week}>{week}</Week>
          ))}
        </WeekRow>
        <DayRow>
          {days.map((day, i) => (
            <Day key={i}>{day}</Day>
          ))}
        </DayRow>
      </Timescale>
      <ChartBody>
        <svg width="100%" height="100%" role="img" aria-label="Gantt chart">
          {[0, 168, 336, 504].map((x) => (
            <g key={x} fill="#fbf2fd">
              <rect x={x} y="0" width="23" height="100%" />
              <rect x={x + 24} y="0" width="23" height="100%" />
            </g>
          ))}
          <path
            d="M47.5 3V439M455.5 3V439"
            stroke="#77747a"
            strokeDasharray="1 3"
          />
          <path d="M143.5 0V439" stroke="#a8a6aa" />
          <line x1="0" x2="100%" y1="65.5" y2="65.5" stroke="#77747a" />
          <line x1="0" x2="100%" y1="87.5" y2="87.5" stroke="#77747a" />

          <path d="M46.5 16V5H49" stroke="#57555a" fill="none" />
          <path d="M48 5H395V16H392V7H48Z" fill="#57555a" />
          <path d="M48.5 7V16H46" stroke="#57555a" fill="none" />
          <path d="M229 225H395V236H392V227H232V236H229Z" fill="#57555a" />

          {bars.map((bar) => (
            <g key={bar.row}>
              <rect
                x={bar.x}
                y={rowCenter(bar.row) - 5}
                width={bar.width}
                height="11"
                fill="#8fb5eb"
              />
              {bar.progress && (
                <rect
                  x={bar.x}
                  y={rowCenter(bar.row) - 1}
                  width={bar.width}
                  height="3"
                  fill="#4584cd"
                />
              )}
              {bar.label && (
                <text x={bar.x + bar.width + 6} y={rowCenter(bar.row) + 3}>
                  {bar.label}
                </text>
              )}
            </g>
          ))}
          {milestones.map(({ row, x, label }) => (
            <g key={row}>
              <path
                d={`M${x + 0.5} ${rowCenter(row) - 5}l5 5.5l-5 5.5l-5 -5.5Z`}
                fill="#57555a"
              />
              <text x={x + 12} y={rowCenter(row) + 3}>
                {label}
              </text>
            </g>
          ))}
          {links.map((link) => (
            <Link key={`${link.from}-${link.to}`} {...link} />
          ))}
        </svg>
      </ChartBody>
      <ScrollRow>
        <ScrollButton aria-label="Scroll left">
          <ArrowIcon d="M5 0V7L1 3.5Z" />
        </ScrollButton>
        <ScrollTrack $lead={57}>
          <ScrollThumb $width={311} />
        </ScrollTrack>
        <ScrollButton aria-label="Scroll right">
          <ArrowIcon d="M2 0V7L6 3.5Z" />
        </ScrollButton>
      </ScrollRow>
    </ChartPane>
  );
}

function Status() {
  const [zoom, setZoom] = useState(68);

  return (
    <StatusBar>
      Ready
      <NewTasks>
        <AutoModeIcon tone={gray} />
        New Tasks : Auto Scheduled
      </NewTasks>
      <Spacer />
      {["gantt", "usage", "team", "sheet", "report"].map((kind) => (
        <ViewButton key={kind} $active={kind === "gantt"} aria-label={`View ${kind}`}>
          <StatusIcon kind={kind} />
        </ViewButton>
      ))}
      <Zoom>
        <button aria-label="Zoom out">
          <Icon w={8} h={8}>
            <path d="M1 4H7" stroke={gray} strokeWidth="2" />
          </Icon>
        </button>
        <ZoomSlider
          type="range"
          aria-label="Zoom"
          value={zoom}
          onChange={(e) => setZoom(e.target.value)}
        />
        <button aria-label="Zoom in">
          <Icon w={8} h={8}>
            <path d="M0 4H8M4 0V8" stroke={gray} strokeWidth="2" />
          </Icon>
        </button>
      </Zoom>
    </StatusBar>
  );
}

function App() {
  const [entry, setEntry] = useState("");

  return (
    <>
      <GlobalStyle />
      <Page>
        <TitleBar />
        <TabBar />
        <RibbonBar />
        <EntryBar>
          <EntryActions>
            <button aria-label="Cancel entry">
              <CancelIcon />
            </button>
            <button aria-label="Accept entry">
              <AcceptIcon />
            </button>
          </EntryActions>
          <EntryInput
            aria-label="Entry"
            value={entry}
            onChange={(e) => setEntry(e.target.value)}
          />
        </EntryBar>
        <WorkArea>
          <ViewLabel>GANTT CHART</ViewLabel>
          <Grid />
          <Splitter />
          <Gantt />
          <VerticalScroll>
            <ScrollButton aria-label="Scroll up">
              <Caret up size={7} />
            </ScrollButton>
            <VerticalThumb />
            <Spacer />
            <ScrollButton aria-label="Scroll down">
              <Caret size={7} />
            </ScrollButton>
            <PaneHandle />
          </VerticalScroll>
        </WorkArea>
        <Status />
        <Banner>www.teachucomp.com/free</Banner>
      </Page>
    </>
  );
}

export default App;
